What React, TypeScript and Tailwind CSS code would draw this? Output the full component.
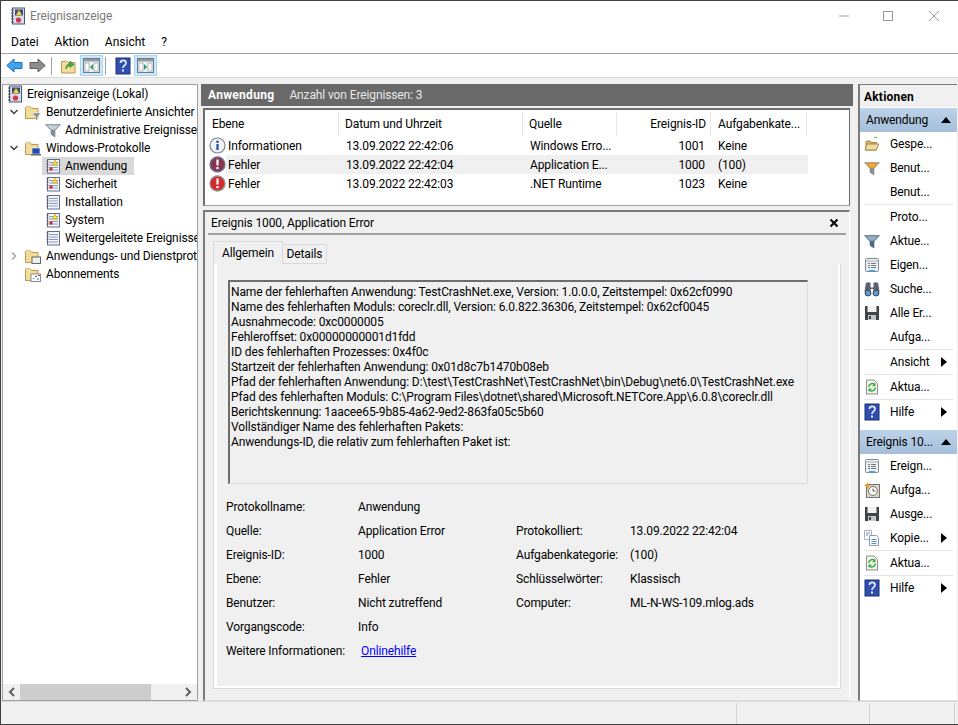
import type { ReactNode } from "react"

function LogIcon({ alert = true }: { alert?: boolean }) {
	return (
		<svg width="16" height="16" viewBox="0 0 16 16" className="shrink-0">
			<rect x="2.5" y="1.5" width="12" height="13.5" fill="#f4f6fb" stroke="#5f6f8f" />
			<path d="M4 4.5h9M4 7h9M4 9.5h9M4 12h9" stroke="#8a9ab8" strokeWidth="1" />
			<path d="M1.5 3h2M1.5 6h2M1.5 9h2M1.5 12h2" stroke="#555" strokeWidth="1" />
			{alert && (
				<>
					<path d="M10 2l3 5H7z" fill="#f7d732" stroke="#b89a20" strokeWidth=".5" />
					<circle cx="6" cy="11" r="1.8" fill="#c8343f" />
				</>
			)}
		</svg>
	)
}

function RootIcon() {
	return (
		<svg width="16" height="18" viewBox="0 0 16 18" className="shrink-0">
			<rect x="2.5" y="1" width="12" height="16" fill="#d8dcec" stroke="#4b5578" />
			<path d="M1 3h2.5M1 6h2.5M1 9h2.5M1 12h2.5M1 15h2.5" stroke="#444" />
			<rect x="5" y="2.5" width="8" height="6" fill="#3c4a72" />
			<path d="M9 3l3 5H6z" fill="#f5d42e" />
			<circle cx="8.5" cy="13" r="2.6" fill="#cc3a44" />
		</svg>
	)
}

function Folder({ badge }: { badge?: ReactNode }) {
	return (
		<svg width="16" height="16" viewBox="0 0 16 16" className="shrink-0">
			<path d="M.5 3.5V14.5H13V4.5H6.5L5 2.5H1.5z" fill="#f3dc9a" stroke="#b89a55" />
			<path d="M2 1.5h3v1H2zM7 3h5v1H7z" fill="#fff6d8" />
			{badge}
		</svg>
	)
}

function Funnel({ color = "#c5d0d8", dark = "#7d8c98" }: { color?: string; dark?: string }) {
	return (
		<svg width="16" height="16" viewBox="0 0 16 16" className="shrink-0">
			<path d="M.5 2.5h15l-5.500 6v6.500l-4-2.500V8.500z" fill={dark} stroke={dark} strokeWidth=".6" />
			<path d="M2 3.200h12L9.800 7.800H6.200z" fill={color} />
		</svg>
	)
}

function Help() {
	return (
		<svg width="16" height="18" viewBox="0 0 16 18" className="shrink-0">
			<rect x="1" y="1" width="14" height="16" fill="#2f4fb0" stroke="#1c2f78" />
			<path d="M5.5 6c0-3.5 5.500-3.500 5.500 0 0 2.500-3 2.200-3 5" fill="none" stroke="#e8ecf8" strokeWidth="1.700" />
			<rect x="7" y="12.500" width="2" height="2" fill="#e8ecf8" />
		</svg>
	)
}

function Refresh() {
	return (
		<svg width="16" height="16" viewBox="0 0 16 16" className="shrink-0">
			<path d="M2.500 1v14h11V4.500L10 1z" fill="#f3f3f3" stroke="#8d8d8d" />
			<path d="M4.800 8a3.400 3.400 0 0 1 5.800-2.400M11.200 8.500a3.400 3.400 0 0 1-5.800 2.400" fill="none" stroke="#2fae3a" strokeWidth="1.500" />
			<path d="M11.500 3.800v3.400H8.100zM4.500 13v-3.400h3.400z" fill="#2fae3a" />
		</svg>
	)
}

function Props() {
	return (
		<svg width="16" height="16" viewBox="0 0 16 16" className="shrink-0">
			<rect x="1.500" y="1.500" width="13" height="13" rx="1" fill="#eef0f2" stroke="#808a94" />
			<path d="M1.500 4h13" stroke="#a5adb5" />
			<path d="M4 6.500h2M7 6.500h5M4 8.500h2M7 8.500h5M4 10.500h2M7 10.500h5" stroke="#6d7a88" />
			<rect x="5" y="13" width="6" height="1.500" fill="#35a7e0" />
		</svg>
	)
}

function Binoculars() {
	return (
		<svg width="16" height="16" viewBox="0 0 16 16" className="shrink-0">
			<path d="M2 1.500h4.500v5h3v-5H14l1.500 9H9.500V8h-3v2.500H.5z" fill="#59626e" />
			<circle cx="4" cy="12" r="3" fill="#5b9bd5" stroke="#39424e" />
			<circle cx="12" cy="12" r="3" fill="#5b9bd5" stroke="#39424e" />
		</svg>
	)
}

function Save() {
	return (
		<svg width="16" height="16" viewBox="0 0 16 16" className="shrink-0">
			<path d="M1 1h14v14H1z" fill="#3f4448" />
			<rect x="3.500" y="1" width="9" height="6" fill="#f2f2f2" />
			<rect x="4" y="10" width="8" height="5" fill="#c4c7ca" />
			<rect x="5" y="11" width="2" height="3" fill="#3f4448" />
		</svg>
	)
}

function Clock() {
	return (
		<svg width="16" height="16" viewBox="0 0 16 16" className="shrink-0">
			<rect x="2.500" y="2.500" width="13" height="13" fill="#d6d6d2" stroke="#7c7466" />
			<circle cx="9" cy="9" r="4.500" fill="#f8f8f5" stroke="#7c7466" />
			<path d="M9 6.500V9h2.500" fill="none" stroke="#555" />
			<path d="M3.500 0l1 2.500L7 3.500 4.500 4.500l-1 2.500-1-2.500L0 3.500l2.500-1z" fill="#f0a020" />
		</svg>
	)
}

function Copy() {
	return (
		<svg width="16" height="16" viewBox="0 0 16 16" className="shrink-0">
			<path d="M.5.500h7v9h-7z" fill="#fff" stroke="#a9b2c0" />
			<path d="M5.500 5.500h7l2 2v8h-9z" fill="#fff" stroke="#8f9bb0" />
			<path d="M2 3h4M2 5h2M7.500 9.500h5M7.500 11.500h5M7.500 13.500h5" stroke="#5b8fc9" />
		</svg>
	)
}

function OpenLog() {
	return (
		<svg width="16" height="16" viewBox="0 0 16 16" className="shrink-0">
			<path d="M2 5.500V14h10.500V6.500H7L6 5H3z" fill="#d8b767" stroke="#a5894a" />
			<path d="M1 14l2-6h11.500l-2 6z" fill="#f1dc9f" stroke="#a5894a" />
			<path d="M10 1.500h3" stroke="#4fc24f" />
		</svg>
	)
}

function Info() {
	return (
		<svg width="17" height="17" viewBox="0 0 17 17" className="shrink-0">
			<circle cx="8.500" cy="8.500" r="7.500" fill="#f1f3f7" stroke="#7d8390" strokeWidth="1.200" />
			<circle cx="8.500" cy="4.700" r="1.300" fill="#1f4fa8" />
			<path d="M8.500 7v6" stroke="#1f4fa8" strokeWidth="2.200" />
		</svg>
	)
}

function ErrorDot({ selected }: { selected?: boolean }) {
	return (
		<svg width="17" height="17" viewBox="0 0 17 17" className="shrink-0">
			<circle cx="8.500" cy="8.500" r="7.500" fill={selected ? "#8a3550" : "#d42a2e"} stroke={selected ? "#6f7696" : "#8f8f8f"} strokeWidth="1.300" />
			<path d="M8.500 3.500v6" stroke="#fff" strokeWidth="2.200" />
			<rect x="7.400" y="11" width="2.200" height="2.200" fill="#fff" />
		</svg>
	)
}

function PaneToggle({ arrow }: { arrow: "left" | "right" }) {
	return (
		<div className="flex h-[21px] w-[23px] items-center justify-center border border-[#a6d5f5] bg-[#cce8fb]">
			<svg width="17" height="15" viewBox="0 0 17 15">
				<rect x=".5" y=".5" width="16" height="14" fill="#eef1f3" stroke="#6f7a83" />
				<rect x="1" y="1" width="15" height="2.500" fill="#8f9aa3" />
				<rect x="2" y="5" width="4" height="8" fill="#fff" stroke="#8f9aa3" strokeWidth=".7" />
				<rect x="11" y="5" width="4" height="8" fill="#fff" stroke="#8f9aa3" strokeWidth=".7" />
				{arrow === "left" ? <path d="M10 6v6L7 9z" fill="#23a05a" /> : <path d="M7 6v6l3-3z" fill="#23a05a" />}
			</svg>
		</div>
	)
}

function Toolbar() {
	return (
		<div className="flex h-[24px] items-center border-b border-[#dcdcdc] bg-white pl-[5px]">
			<svg width="17" height="15" viewBox="0 0 17 15" className="shrink-0">
				<path d="M.8 7.500 8 1v3.500h8v6H8V14z" fill="#3ea4ee" stroke="#1c6fb8" />
			</svg>
			<svg width="17" height="15" viewBox="0 0 17 15" className="ml-[6px] shrink-0">
				<path d="M16.200 7.500 9 1v3.500H1v6h8V14z" fill="#8d8d8d" stroke="#5e5e5e" />
			</svg>
			<div className="ml-[5px] h-[18px] w-px bg-[#a0a0a0]" />
			<div className="ml-[9px]">
				<svg width="15" height="16" viewBox="0 0 15 16">
					<path d="M.5 3.500V15h13.500V4.500H7L5.500 3z" fill="#f3dc9a" stroke="#b89a55" />
					<path d="M5 11c0-4 2-5.500 4-5.500V3l4 3.500-4 3V7.500C7.500 7.500 6 9 5 11z" fill="#3fae3f" stroke="#2a7f2a" strokeWidth=".6" />
				</svg>
			</div>
			<div className="ml-[4px]">
				<PaneToggle arrow="left" />
			</div>
			<div className="ml-[2px] h-[18px] w-px bg-[#a0a0a0]" />
			<div className="ml-[9px]">
				<Help />
			</div>
			<div className="ml-[3px]">
				<PaneToggle arrow="right" />
			</div>
		</div>
	)
}

function Chevron({ open }: { open: boolean }) {
	return (
		<svg width="10" height="10" viewBox="0 0 10 10" className="shrink-0">
			{open ? (
				<path d="M1.500 3 5 6.500 8.500 3" fill="none" stroke="#404040" strokeWidth="1.500" />
			) : (
				<path d="M3 1.500 6.500 5 3 8.500" fill="none" stroke="#a6a6a6" strokeWidth="1.500" />
			)}
		</svg>
	)
}

const funnelBadge = <path d="M7 9h9l-3.500 3.500V16h-2v-3.500z" fill="#7d8c98" stroke="#fff" strokeWidth=".5" />
const pcBadge = <><rect x="7" y="8" width="8" height="6" fill="#1d4fb0" stroke="#fff" strokeWidth=".6" /><rect x="6" y="14" width="10" height="1.500" fill="#666" /></>
const appBadge = <rect x="7" y="9" width="8.500" height="6.500" fill="#eee" stroke="#666" />
const subBadge = <><rect x="6" y="8" width="9.500" height="7.500" fill="#fff" stroke="#8a8a8a" /><path d="M8 13l1-1M10 10.500h2M12 13h2" stroke="#2a72c0" /><path d="M13 9.500h2" stroke="#d33" /></>

function Tree() {
	const row = "flex h-[18px] items-center"
	const lbl = "whitespace-nowrap"
	return (
		<div className="flex w-[196px] shrink-0 flex-col overflow-hidden border border-[#a0a0a0] bg-white">
			<div className="flex-1 overflow-hidden">
				<div className={`${row} pl-[4px]`}>
					<RootIcon />
					<span className={`ml-[4px] ${lbl}`}>Ereignisanzeige (Lokal)</span>
				</div>
				<div className={`${row} pl-[6px]`}>
					<Chevron open />
					<div className="ml-[6px]"><Folder badge={funnelBadge} /></div>
					<span className={`ml-[5px] ${lbl}`}>Benutzerdefinierte Ansichter</span>
				</div>
				<div className={`${row} pl-[42px]`}>
					<Funnel />
					<span className={`ml-[4px] ${lbl}`}>Administrative Ereignisse</span>
				</div>
				<div className={`${row} pl-[6px]`}>
					<Chevron open />
					<div className="ml-[6px]"><Folder badge={pcBadge} /></div>
					<span className={`ml-[5px] ${lbl}`}>Windows-Protokolle</span>
				</div>
				<div className={`${row} pl-[39px]`}>
					<div className="flex h-[18px] w-[92px] items-center bg-[#d9d9d9] pl-[3px]">
						<LogIcon />
						<span className="ml-[4px]">Anwendung</span>
					</div>
				</div>
				<div className={`${row} pl-[42px]`}>
					<LogIcon />
					<span className={`ml-[4px] ${lbl}`}>Sicherheit</span>
				</div>
				<div className={`${row} pl-[42px]`}>
					<LogIcon alert={false} />
					<span className={`ml-[4px] ${lbl}`}>Installation</span>
				</div>
				<div className={`${row} pl-[42px]`}>
					<LogIcon />
					<span className={`ml-[4px] ${lbl}`}>System</span>
				</div>
				<div className={`${row} pl-[42px]`}>
					<LogIcon alert={false} />
					<span className={`ml-[4px] ${lbl}`}>Weitergeleitete Ereignisse</span>
				</div>
				<div className={`${row} pl-[6px]`}>
					<Chevron open={false} />
					<div className="ml-[6px]"><Folder badge={appBadge} /></div>
					<span className={`ml-[5px] ${lbl}`}>Anwendungs- und Dienstprotokolle</span>
				</div>
				<div className={`${row} pl-[22px]`}>
					<Folder badge={subBadge} />
					<span className={`ml-[5px] ${lbl}`}>Abonnements</span>
				</div>
			</div>
			<div className="flex h-[16px] items-center bg-[#f0f0f0] text-[#606060]">
				<svg width="17" height="16" viewBox="0 0 17 16" className="shrink-0">
					<path d="M11 4 7 8l4 4" fill="none" stroke="#606060" strokeWidth="2" />
				</svg>
				<div className="h-[16px] w-[131px] bg-[#cdcdcd]" />
				<div className="flex-1" />
				<svg width="17" height="16" viewBox="0 0 17 16" className="shrink-0">
					<path d="M6 4l4 4-4 4" fill="none" stroke="#606060" strokeWidth="2" />
				</svg>
			</div>
		</div>
	)
}

const events = [
	{ kind: "info", level: "Informationen", date: "13.09.2022 22:42:06", src: "Windows Erro...", id: "1001", task: "Keine" },
	{ kind: "sel", level: "Fehler", date: "13.09.2022 22:42:04", src: "Application E...", id: "1000", task: "(100)" },
	{ kind: "err", level: "Fehler", date: "13.09.2022 22:42:03", src: ".NET Runtime", id: "1023", task: "Keine" },
]

function EventList() {
	const th = "flex h-[24px] items-center border-r border-[#e5e5e5]"
	return (
		<div className="mt-[1px] h-[98px] shrink-0 border-t-2 border-r border-b border-l-2 border-[#6d6d6d] border-b-[#a0a0a0] bg-white pt-[2px] pl-px">
			<div className="flex w-[602px]">
				<div className={`${th} w-[133px] pl-[6px]`}>Ebene</div>
				<div className={`${th} w-[184px] pl-[6px]`}>Datum und Uhrzeit</div>
				<div className={`${th} w-[94px] pl-[6px]`}>Quelle</div>
				<div className={`${th} w-[94px] justify-end pr-[4px]`}>Ereignis-ID</div>
				<div className={`${th} w-[96px] pl-[7px]`}>Aufgabenkate...</div>
			</div>
			{events.map(e => (
				<div key={e.date} className="flex h-[19px] w-[602px] items-center">
					<div className="flex w-[20px] justify-center pl-[3px]">
						{e.kind === "info" ? <Info /> : <ErrorDot selected={e.kind === "sel"} />}
					</div>
					<div className={`flex h-[19px] flex-1 items-center ${e.kind === "sel" ? "bg-[#f0f0f0]" : ""}`}>
						<div className="w-[119px] pl-[2px]">{e.level}</div>
						<div className="w-[184px] pl-[1px]">{e.date}</div>
						<div className="w-[94px] pl-[1px]">{e.src}</div>
						<div className="w-[82px] text-right">{e.id}</div>
						<div className="pl-[13px]">{e.task}</div>
					</div>
				</div>
			))}
		</div>
	)
}

const message = [
	"Name der fehlerhaften Anwendung: TestCrashNet.exe, Version: 1.0.0.0, Zeitstempel: 0x62cf0990",
	"Name des fehlerhaften Moduls: coreclr.dll, Version: 6.0.822.36306, Zeitstempel: 0x62cf0045",
	"Ausnahmecode: 0xc0000005",
	"Fehleroffset: 0x00000000001d1fdd",
	"ID des fehlerhaften Prozesses: 0x4f0c",
	"Startzeit der fehlerhaften Anwendung: 0x01d8c7b1470b08eb",
	"Pfad der fehlerhaften Anwendung: D:\\test\\TestCrashNet\\TestCrashNet\\bin\\Debug\\net6.0\\TestCrashNet.exe",
	"Pfad des fehlerhaften Moduls: C:\\Program Files\\dotnet\\shared\\Microsoft.NETCore.App\\6.0.8\\coreclr.dll",
	"Berichtskennung: 1aacee65-9b85-4a62-9ed2-863fa05c5b60",
	"Vollständiger Name des fehlerhaften Pakets:",
	"Anwendungs-ID, die relativ zum fehlerhaften Paket ist:",
]

const fields = [
	["Protokollname:", "Anwendung", "", ""],
	["Quelle:", "Application Error", "Protokolliert:", "13.09.2022 22:42:04"],
	["Ereignis-ID:", "1000", "Aufgabenkategorie:", "(100)"],
	["Ebene:", "Fehler", "Schlüsselwörter:", "Klassisch"],
	["Benutzer:", "Nicht zutreffend", "Computer:", "ML-N-WS-109.mlog.ads"],
	["Vorgangscode:", "Info", "", ""],
]

function Detail() {
	return (
		<div className="mt-[4px] flex min-h-0 flex-1 flex-col border-t-2 border-r border-b border-l-2 border-[#7a7a7a] border-r-white border-b-[#dcdcdc] pr-[3px] pl-[3px]">
			<div className="flex h-[23px] shrink-0 items-center justify-between border-b-2 border-[#a0a0a0] pr-[5px] pl-[3px]">
				<span>Ereignis 1000, Application Error</span>
				<svg width="10" height="10" viewBox="0 0 10 10" className="mr-[2px]">
					<path d="M1.500 1.500l7 7M8.500 1.500l-7 7" stroke="#000" strokeWidth="2" />
				</svg>
			</div>
			<div className="mt-[6px] flex h-[23px] shrink-0 items-end pl-[5px]">
				<div className="flex h-[23px] w-[70px] items-center justify-center border-x border-t border-[#d9d9d9] bg-[#f0f0f0]">Allgemein</div>
				<div className="flex h-[20px] w-[44px] items-center justify-center border-y border-r border-[#d9d9d9]">Details</div>
			</div>
			<div className="mr-[5px] ml-[5px] flex-1 border border-t-0 border-[#d9d9d9]">
				<div className="h-full border-r-2 border-b-2 border-l-[3px] border-white pt-[16px] pl-[11px]">
					<div className="h-[204px] w-[580px] border-t-2 border-r border-b border-l-2 border-[#6d6d6d] border-r-[#dcdcdc] border-b-[#dcdcdc] pt-[3px] pl-[1px] leading-[15px]">
						{message.map(l => (
							<div key={l} className="whitespace-nowrap">{l}</div>
						))}
					</div>
					<div className="mt-[11px] -ml-[2px] grid auto-rows-[24px] grid-cols-[132px_158px_114px_1fr] items-center">
						{fields.flat().map((f, i) => (
							<div key={i}>{f}</div>
						))}
						<div className="col-span-4 flex">
							<span className="w-[135px]">Weitere Informationen:</span>
							<span className="text-[#0000ff] underline">Onlinehilfe</span>
						</div>
					</div>
				</div>
			</div>
			<div className="h-[11px] shrink-0" />
		</div>
	)
}

type Act = { icon?: ReactNode; label: string; arrow?: boolean; sep?: boolean }

const topActions: Act[] = [
	{ icon: <OpenLog />, label: "Gespe..." },
	{ icon: <Funnel color="#f5a623" dark="#8a8f94" />, label: "Benut..." },
	{ label: "Benut..." },
	{ sep: true, label: "Proto..." },
	{ icon: <Funnel color="#8fb0c8" dark="#4f6a7e" />, label: "Aktue..." },
	{ icon: <Props />, label: "Eigen..." },
	{ icon: <Binoculars />, label: "Suche..." },
	{ icon: <Save />, label: "Alle Er..." },
	{ label: "Aufga..." },
	{ sep: true, label: "Ansicht", arrow: true },
	{ sep: true, icon: <Refresh />, label: "Aktua..." },
	{ sep: true, icon: <Help />, label: "Hilfe", arrow: true },
]

const eventActions: Act[] = [
	{ icon: <Props />, label: "Ereign..." },
	{ icon: <Clock />, label: "Aufga..." },
	{ icon: <Save />, label: "Ausge..." },
	{ icon: <Copy />, label: "Kopie...", arrow: true },
	{ sep: true, icon: <Refresh />, label: "Aktua..." },
	{ sep: true, icon: <Help />, label: "Hilfe", arrow: true },
]

function ActionGroup({ title, items }: { title: string; items: Act[] }) {
	return (
		<div>
			<div className="flex h-[24px] items-center justify-between bg-gradient-to-b from-[#bcd2e8] to-[#a5bfdb] pr-[6px] pl-[6px]">
				<span>{title}</span>
				<svg width="10" height="6" viewBox="0 0 10 6"><path d="M5 0l5 6H0z" fill="#000" /></svg>
			</div>
			{items.map((a, i) => (
				<div key={i}>
					{a.sep && <div className="mx-[4px] h-px bg-[#e5e5e5]" />}
					<div className="flex h-[24px] items-center pr-[10px] pl-[4px]">
						<div className="flex w-[16px] justify-center">{a.icon}</div>
						<span className="ml-[10px] flex-1">{a.label}</span>
						{a.arrow && (
							<svg width="6" height="10" viewBox="0 0 6 10"><path d="M0 0l6 5-6 5z" fill="#000" /></svg>
						)}
					</div>
				</div>
			))}
		</div>
	)
}

function Actions() {
	return (
		<div className="ml-[5px] flex w-[99px] shrink-0 flex-col border-t border-b border-l-2 border-[#7a7a7a] border-b-[#dcdcdc] bg-white">
			<div className="flex h-[23px] items-center border-b border-white bg-[#f0f0f0] pt-px pl-[4px] font-bold tracking-[0.2px]">Aktionen</div>
			<ActionGroup title="Anwendung" items={topActions} />
			<div className="h-[6px]" />
			<ActionGroup title="Ereignis 10..." items={eventActions} />
		</div>
	)
}

export default function App() {
	return (
		<div className="flex h-[725px] w-[958px] flex-col overflow-hidden border-t border-b border-l border-t-[#404040] border-b-[#404040] border-l-[#404040] bg-[#f0f0f0] font-['Roboto',sans-serif] text-[12px] leading-[16px] tracking-[-0.12px] text-black">
			{/* Title bar */}
			<div className="flex h-[30px] shrink-0 items-center bg-white pl-[9px]">
				<RootIcon />
				<span className="ml-[4px] text-[#7a7a7a]">Ereignisanzeige</span>
				<div className="ml-auto flex items-center">
					<svg width="10" height="10" viewBox="0 0 10 10" className="mr-[34px]"><path d="M0 5h10" stroke="#9a9a9a" /></svg>
					<svg width="10" height="10" viewBox="0 0 10 10" className="mr-[36px]"><rect x=".5" y=".5" width="9" height="9" fill="none" stroke="#9a9a9a" /></svg>
					<svg width="10" height="10" viewBox="0 0 10 10" className="mr-[19px]"><path d="M0 0l10 10M10 0 0 10" stroke="#9a9a9a" /></svg>
				</div>
			</div>
			{/* Menu */}
			<div className="flex h-[23px] shrink-0 items-center gap-[16px] border-b border-[#a0a0a0] bg-white pl-[10px] tracking-normal">
				<span>Datei</span>
				<span>Aktion</span>
				<span>Ansicht</span>
				<span>?</span>
			</div>
			<Toolbar />
			<div className="flex min-h-0 flex-1 pt-[6px] pl-px">
				<Tree />
				<div className="ml-[3px] flex w-[652px] shrink-0 flex-col">
					<div className="flex h-[22px] shrink-0 items-center bg-[#696969] pl-[7px] text-[#e8e8e8]">
						<span className="font-bold tracking-[0.3px] text-white">Anwendung</span>
						<span className="ml-[15px]">Anzahl von Ereignissen: 3</span>
					</div>
					<div className="flex min-h-0 flex-1 flex-col pt-px pr-[3px] pl-[2px]">
						<EventList />
						<Detail />
					</div>
				</div>
				<Actions />
			</div>
			{/* Status bar */}
			<div className="flex h-[23px] shrink-0 border-t border-[#dcdcdc] pt-px">
				<div className="w-[736px] border-r border-[#d4d4d4]" />
				<div className="w-[133px] border-r border-[#d4d4d4]" />
				<div className="w-[85px] border-r border-[#d4d4d4]" />
			</div>
		</div>
	)
}
